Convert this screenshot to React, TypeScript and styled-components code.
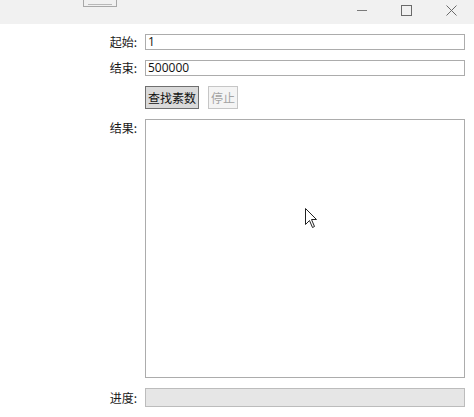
import styled, { createGlobalStyle } from "styled-components";

const GlobalStyle = createGlobalStyle`
  html, body {
    margin: 0;
    padding: 0;
    background: #ffffff;
  }
  body {
    font-family: "Noto Sans CJK SC", "Noto Sans", sans-serif;
    font-size: 12px;
    color: #1a1a1a;
  }
`;

const Window = styled.div`
  position: relative;
  width: 474px;
  height: 417px;
  overflow: hidden;
  background: #ffffff;
`;

const TitleBar = styled.div`
  height: 24px;
  background: #f1f1f1;
  display: flex;
  align-items: flex-start;
`;

const TabStub = styled.div`
  margin-left: 83px;
  width: 32px;
  height: 5px;
  border: 1px solid #a8a8a8;
  border-top: none;
  display: flex;
  align-items: flex-end;
  justify-content: center;
  padding-bottom: 1px;
  box-sizing: content-box;

  &::after {
    content: "";
    width: 24px;
    height: 1px;
    background: #b8b8b8;
  }
`;

const Caption = styled.div`
  margin-left: auto;
  display: flex;
  height: 24px;
`;

const CaptionButton = styled.div`
  width: 45px;
  height: 20px;
  display: flex;
  align-items: center;
  justify-content: center;
`;

const Form = styled.div`
  display: grid;
  grid-template-columns: 137px 320px;
  grid-template-rows: 16px 16px 23px 259px 19px;
  column-gap: 8px;
  row-gap: 10px;
  padding-top: 10px;
`;

const Label = styled.div<{ top?: boolean }>`
  text-align: right;
  align-self: ${(p) => (p.top ? "start" : "center")};
  padding-top: ${(p) => (p.top ? "1px" : "0")};
  font-size: 12px;
  color: #1a1a1a;
  line-height: 16px;
`;

const Field = styled.div`
  border: 1px solid #acacac;
  background: #ffffff;
  padding: 0 2px;
  font-family: "Open Sans", "Noto Sans CJK SC", sans-serif;
  font-size: 12px;
  line-height: 14px;
  color: #111;
`;

const ButtonRow = styled.div`
  display: flex;
  gap: 9px;
`;

const Button = styled.div<{ disabled?: boolean }>`
  padding: 0 2px;
  display: flex;
  align-items: center;
  justify-content: center;
  font-size: 12px;
  border: 1px solid ${(p) => (p.disabled ? "#c6c6c6" : "#6f6f6f")};
  background: ${(p) => (p.disabled ? "#f4f4f4" : "#dadada")};
  color: ${(p) => (p.disabled ? "#a3a3a3" : "#111")};
`;

const ResultBox = styled.div`
  border: 1px solid #acacac;
  background: #ffffff;
`;

const Progress = styled.div`
  border: 1px solid #bcbcbc;
  background: #e6e6e6;
`;

const Cursor = styled.svg`
  position: absolute;
  left: 305px;
  top: 208px;
`;

export default function App() {
  return (
    <>
      <GlobalStyle />
      <Window>
        <TitleBar>
          <TabStub />
          <Caption>
            <CaptionButton>
              <svg width="10" height="10" viewBox="0 0 10 10">
                <path d="M0 5.5h10" stroke="#7a7a7a" strokeWidth="1" />
              </svg>
            </CaptionButton>
            <CaptionButton>
              <svg width="11" height="11" viewBox="0 0 11 11">
                <rect x="0.5" y="0.5" width="10" height="10" fill="none" stroke="#6a6a6a" strokeWidth="1" />
              </svg>
            </CaptionButton>
            <CaptionButton>
              <svg width="11" height="11" viewBox="0 0 11 11">
                <path d="M0.5 0.5l10 10M10.5 0.5l-10 10" stroke="#6a6a6a" strokeWidth="1" />
              </svg>
            </CaptionButton>
          </Caption>
        </TitleBar>
        <Form>
          <Label>起始:</Label>
          <Field>1</Field>
          <Label>结束:</Label>
          <Field>500000</Field>
          <div />
          <ButtonRow>
            <Button>查找素数</Button>
            <Button disabled>停止</Button>
          </ButtonRow>
          <Label top>结果:</Label>
          <ResultBox />
          <Label>进度:</Label>
          <Progress />
        </Form>
        <Cursor width="13" height="21" viewBox="0 0 13 21">
          <path
            d="M0.5 0.5 L0.5 16.5 L4.5 12.5 L7.5 19.5 L9.5 18.5 L6.5 11.5 L11.5 11.5 Z"
            fill="#ffffff"
            stroke="#222"
            strokeWidth="1"
          />
        </Cursor>
      </Window>
    </>
  );
}
